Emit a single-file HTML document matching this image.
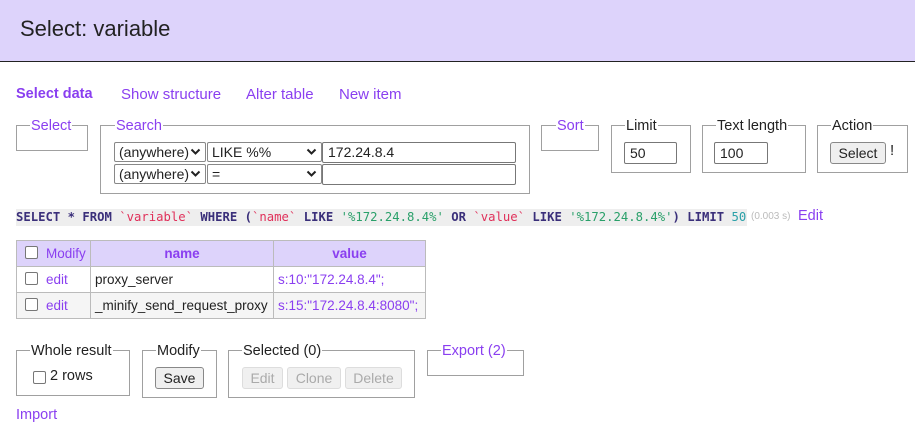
<!DOCTYPE html>
<html><head><meta charset="utf-8"><style>
*{box-sizing:border-box}
body{margin:0;width:915px;height:427px;overflow:hidden;background:#fff;font-family:"Liberation Sans",sans-serif;font-size:14px;color:#222;position:relative}
a{color:#8a3ff0;text-decoration:none}
.abs{position:absolute}
#hd{position:absolute;left:0;top:0;width:915px;height:62px;background:#ddd3fb;border-bottom:1px solid #222}
#hd span{position:absolute;left:20px;top:16px;font-size:22px;color:#222}
.fs{position:absolute;border:1px solid #a0a0a0}
.lg{position:absolute;top:-8px;left:9px;background:#fff;padding:0 1px;font-size:14.5px;line-height:16px;color:#222}
.lg.l{color:#8a3ff0}
.sel{position:absolute;height:20px;border:1px solid #888;border-radius:2px;font-size:14px;line-height:18px;padding-left:4px;background:#fff;color:#222}
.sel svg{position:absolute;right:4px;top:5px}
.inp{position:absolute;height:22px;border:1px solid #777;border-radius:2px;font-size:14px;line-height:20px;padding-left:5px;background:#fff}
.btn{position:absolute;height:22px;border:1px solid #888;border-radius:3px;background:#efefef;font-size:14px;line-height:20px;text-align:center;color:#222}
.btn.d{border-color:#ddd;color:#aaa;background:#f0f0f0}
.cb{position:absolute;width:13px;height:13px;border:1px solid #777;border-radius:2px;background:#fff}
#sql{position:absolute;left:16px;top:209px;width:731px;height:17px;background:#eee;font-family:"DejaVu Sans Mono",monospace;font-weight:bold;font-size:12.25px;line-height:17px;white-space:pre;color:#3a2f7a}
.r{color:#e0305a;font-weight:normal}.g{color:#2aa06a;font-weight:normal}.c{color:#2aa0a8;font-weight:normal}
table{position:absolute;left:16px;top:240px;border-collapse:collapse;font-size:13.5px;table-layout:fixed;width:409px}
td,th{border:1px solid #bbb;height:26px;padding:0 4px;white-space:nowrap;overflow:hidden}
th{background:#ddd3fb;color:#8a3ff0}
tr.o td{background:#f5f5f5}
</style></head><body>
<div id="hd"><span>Select: variable</span></div>
<div class="abs" style="left:16px;top:86px;font-size:14.5px"><a style="font-weight:bold">Select data</a></div>
<div class="abs" style="left:121px;top:86px;font-size:15px"><a>Show structure</a></div>
<div class="abs" style="left:246px;top:86px;font-size:15px"><a>Alter table</a></div>
<div class="abs" style="left:339px;top:86px;font-size:15px"><a>New item</a></div>

<div class="fs" style="left:16px;top:125px;width:72px;height:26px"><div class="lg l" style="left:13px">Select</div></div>
<div class="fs" style="left:100px;top:125px;width:430px;height:69px"><div class="lg l" style="left:14px">Search</div></div>
<div class="sel" style="left:114px;top:142px;width:92px">(anywhere)<svg width="11" height="8" viewBox="0 0 11 8"><path d="M1.5 1.5L5.5 5.5L9.5 1.5" stroke="#222" stroke-width="2" fill="none"/></svg></div>
<div class="sel" style="left:207px;top:142px;width:115px">LIKE %%<svg width="11" height="8" viewBox="0 0 11 8"><path d="M1.5 1.5L5.5 5.5L9.5 1.5" stroke="#222" stroke-width="2" fill="none"/></svg></div>
<div class="inp" style="left:322px;top:142px;width:194px;height:21px;line-height:19px">172.24.8.4</div>
<div class="sel" style="left:114px;top:164px;width:92px">(anywhere)<svg width="11" height="8" viewBox="0 0 11 8"><path d="M1.5 1.5L5.5 5.5L9.5 1.5" stroke="#222" stroke-width="2" fill="none"/></svg></div>
<div class="sel" style="left:207px;top:164px;width:115px">=<svg width="11" height="8" viewBox="0 0 11 8"><path d="M1.5 1.5L5.5 5.5L9.5 1.5" stroke="#222" stroke-width="2" fill="none"/></svg></div>
<div class="inp" style="left:322px;top:164px;width:194px;height:21px"></div>
<div class="fs" style="left:541px;top:125px;width:58px;height:26px"><div class="lg l" style="left:14px">Sort</div></div>
<div class="fs" style="left:611px;top:125px;width:80px;height:48px"><div class="lg" style="left:13px">Limit</div></div>
<div class="inp" style="left:624px;top:142px;width:53px">50</div>
<div class="fs" style="left:702px;top:125px;width:104px;height:48px"><div class="lg" style="left:13px">Text length</div></div>
<div class="inp" style="left:714px;top:142px;width:54px">100</div>
<div class="fs" style="left:817px;top:125px;width:91px;height:48px"><div class="lg" style="left:13px">Action</div></div>
<div class="btn" style="left:830px;top:142px;width:56px">Select</div>
<div class="abs" style="left:890px;top:142px;font-size:15px">!</div>

<div id="sql">SELECT * FROM <span class="r">`variable`</span> WHERE (<span class="r">`name`</span> LIKE <span class="g">'%172.24.8.4%'</span> OR <span class="r">`value`</span> LIKE <span class="g">'%172.24.8.4%'</span>) LIMIT <span class="c">50</span></div>
<div class="abs" style="left:751px;top:211px;font-size:10px;color:#bbb">(0.003 s)</div>
<div class="abs" style="left:798px;top:208px;font-size:14.5px"><a>Edit</a></div>

<table>
<colgroup><col style="width:74px"><col style="width:183px"><col style="width:152px"></colgroup>
<tr><th style="text-align:left;font-weight:normal;padding-left:29px">Modify</th><th>name</th><th>value</th></tr>
<tr><td style="padding-left:29px"><a>edit</a></td><td>proxy_server</td><td><a>s:10:"172.24.8.4";</a></td></tr>
<tr class="o"><td style="padding-left:29px"><a>edit</a></td><td>_minify_send_request_proxy</td><td><a>s:15:"172.24.8.4:8080";</a></td></tr>
</table>
<div class="cb" style="left:25px;top:246px"></div>
<div class="cb" style="left:25px;top:272px"></div>
<div class="cb" style="left:25px;top:298px"></div>

<div class="fs" style="left:16px;top:350px;width:114px;height:46px"><div class="lg" style="left:13px">Whole result</div></div>
<div class="cb" style="left:33px;top:371px"></div>
<div class="abs" style="left:50px;top:368px;font-size:14.5px">2 rows</div>
<div class="fs" style="left:142px;top:350px;width:75px;height:48px"><div class="lg" style="left:13px">Modify</div></div>
<div class="btn" style="left:155px;top:367px;width:49px">Save</div>
<div class="fs" style="left:228px;top:350px;width:187px;height:48px"><div class="lg" style="left:13px">Selected (0)</div></div>
<div class="btn d" style="left:242px;top:367px;width:41px">Edit</div>
<div class="btn d" style="left:287px;top:367px;width:54px">Clone</div>
<div class="btn d" style="left:345px;top:367px;width:57px">Delete</div>
<div class="fs" style="left:427px;top:350px;width:97px;height:26px"><div class="lg l" style="left:13px">Export (2)</div></div>
<div class="abs" style="left:16px;top:407px;font-size:14.5px"><a>Import</a></div>
</body></html>
